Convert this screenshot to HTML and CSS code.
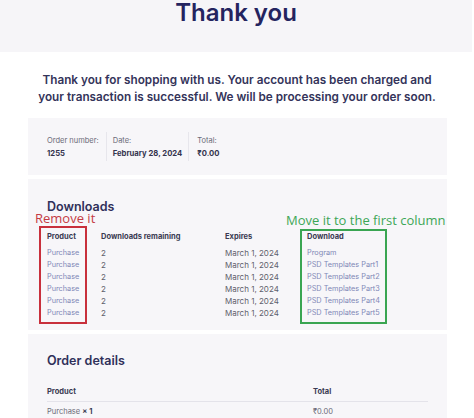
FILE: index.html
```html
<!DOCTYPE html>
<html lang="en">
<head>
<meta charset="utf-8">
<title>Thank you</title>
<link rel="stylesheet" href="styles.css">
</head>
<body>
<header class="hero">
  <h1 class="hero-title">Thank you</h1>
</header>
<p class="intro">Thank you for shopping with us. Your account has been charged and<br>your transaction is successful. We will be processing your order soon.</p>

<section class="card summary">
  <div class="sum-col">
    <div class="sum-label">Order number:</div>
    <div class="sum-value">1255</div>
  </div>
  <div class="sum-col">
    <div class="sum-label">Date:</div>
    <div class="sum-value">February 28, 2024</div>
  </div>
  <div class="sum-col last">
    <div class="sum-label">Total:</div>
    <div class="sum-value">₹0.00</div>
  </div>
</section>

<section class="card downloads">
  <h2 class="card-title">Downloads</h2>
  <div class="dl-table">
    <div class="th">Product</div><div class="th">Downloads remaining</div><div class="th">Expires</div><div class="th">Download</div>
    <div class="link">Purchase</div><div class="td">2</div><div class="td">March 1, 2024</div><div class="link">Program</div>
    <div class="link">Purchase</div><div class="td">2</div><div class="td">March 1, 2024</div><div class="link">PSD Templates Part1</div>
    <div class="link">Purchase</div><div class="td">2</div><div class="td">March 1, 2024</div><div class="link">PSD Templates Part2</div>
    <div class="link">Purchase</div><div class="td">2</div><div class="td">March 1, 2024</div><div class="link">PSD Templates Part3</div>
    <div class="link">Purchase</div><div class="td">2</div><div class="td">March 1, 2024</div><div class="link">PSD Templates Part4</div>
    <div class="link">Purchase</div><div class="td">2</div><div class="td">March 1, 2024</div><div class="link">PSD Templates Part5</div>
  </div>
  <div class="note note-red">Remove it</div>
  <div class="box box-red"></div>
  <div class="note note-green">Move it to the first column</div>
  <div class="box box-green"></div>
</section>

<section class="card details">
  <h2 class="card-title">Order details</h2>
  <div class="od-table">
    <div class="od-row od-head"><div class="od-name">Product</div><div class="od-total">Total</div></div>
    <div class="od-row"><div class="od-name"><span class="muted">Purchase</span> <strong>× 1</strong></div><div class="od-total muted">₹0.00</div></div>
  </div>
</section>
</body>
</html>
```

FILE: styles.css
```css
html, body {
  margin: 0;
  padding: 0;
  background: #ffffff;
}
body {
  font-family: Inter, "Noto Sans", sans-serif;
  color: #55556a;
  width: 474px;
  overflow: hidden;
}
.hero {
  background: #f6f5f8;
  height: 52px;
  width: 472px;
  text-align: center;
  overflow: hidden;
}
.hero-title {
  margin: 0;
  padding-top: 0;
  font-size: 24px;
  line-height: 25px;
  font-weight: 600;
  color: #24245f;
}
.intro {
  margin: 20px 0 12px;
  text-align: center;
  font-size: 11.75px;
  line-height: 17px;
  font-weight: 600;
  color: #34345a;
}
.card {
  background: #f7f6f9;
  margin: 0 27px 4px 28px;
  box-sizing: border-box;
  width: 419px;
}
.summary {
  display: flex;
  padding: 14px 19px;
  height: 57px;
}
.sum-col {
  padding: 2px 6px;
  border-right: 1px solid #e7e6ec;
}
.sum-col:first-child { padding-left: 0; padding-right: 7px; }
.sum-col.last { border-right: none; padding-left: 8px; }
.sum-label {
  font-size: 7.5px;
  line-height: 13px;
  color: #6b6b78;
}
.sum-value {
  font-size: 7.7px;
  line-height: 13px;
  font-weight: 700;
  color: #34344e;
}
.downloads {
  position: relative;
  padding: 20px 19px 11px;
}
.card-title {
  margin: 0;
  font-size: 12.5px;
  line-height: 16px;
  font-weight: 600;
  color: #30305a;
}
.dl-table {
  margin-top: 16px;
  display: grid;
  grid-template-columns: 54px 124px 82px auto;
  grid-template-rows: 16px;
  grid-auto-rows: 12px;
  font-size: 8px;
  line-height: 12px;
}
.dl-table .th {
  grid-row: 1;
  font-weight: 700;
  color: #3a3a52;
  font-size: 7.5px;
}
.td { color: #5f5f6c; }
.link { color: #8087b6; font-size: 7.3px; }
.note {
  position: absolute;
  font-family: "Open Sans", "Noto Sans", sans-serif;
  font-size: 13px;
  line-height: 18px;
  white-space: nowrap;
}
.note-red { left: 7px; top: 30px; color: #c43a43; }
.note-green { left: 258px; top: 32px; color: #3da657; }
.box {
  position: absolute;
  box-sizing: border-box;
  border: 2px solid;
}
.box-red { left: 11px; top: 47px; width: 48px; height: 98px; border-color: #c8303c; }
.box-green { left: 272px; top: 50px; width: 87px; height: 95px; border-color: #3aa552; }
.details {
  padding: 19px 19px 12px;
  height: 100px;
}
.od-table {
  margin-top: 17px;
  font-size: 7.5px;
  line-height: 12px;
}
.od-row {
  display: grid;
  grid-template-columns: 266px auto;
  padding: 0 0 4px;
}
.od-head {
  font-weight: 700;
  color: #3a3a52;
  border-bottom: 1px solid #e4e3ea;
  padding-bottom: 3px;
  margin-bottom: 4px;
}
.muted { color: #6b6b78; }
strong { color: #3a3a52; font-weight: 700; }
```
